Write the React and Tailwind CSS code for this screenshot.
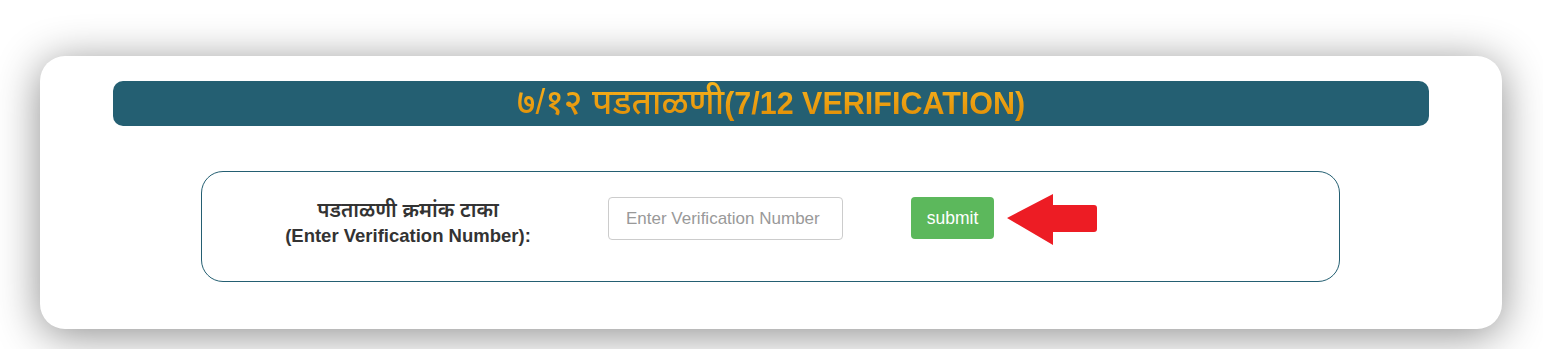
export default function App() {
  return (
    <div
      className="w-full bg-white pt-[56px] pb-[20px] pl-[40px] pr-[41px]"
      style={{ fontFamily: '"Liberation Sans", "Noto Sans", sans-serif' }}
    >
      <div className="box-border h-[273px] rounded-[25px] bg-white pt-[25px] shadow-[0_6px_44px_rgba(0,0,0,0.45)]">
        <div className="mx-[73px] flex h-[45px] items-center justify-center rounded-[10px] bg-[#245f72]">
          <h2 className="bg-gradient-to-b from-[#f8b51e] to-[#dc8600] bg-clip-text text-[30.5px] font-bold leading-[45px] text-transparent">
            <span className="text-[35px] font-medium leading-none">७/१२ पडताळणी</span>(7/12 VERIFICATION)
          </h2>
        </div>
        <div className="ml-[161px] mr-[162px] mt-[45px] box-border flex h-[111px] items-start rounded-[22px] border border-[#245f72] pt-[25px]">
          <div className="ml-[6px] w-[400px] text-center text-[18.5px] font-bold leading-[26px] text-[#333]">
            <div className="text-[20.5px] font-semibold">पडताळणी क्रमांक टाका</div>
            <div>(Enter Verification Number):</div>
          </div>
          <input
            type="text"
            placeholder="Enter Verification Number"
            className="box-border h-[43px] w-[235px] rounded-[4px] border border-[#ccc] bg-white px-[17px] text-[17px] text-[#555] placeholder:text-[#999] outline-none"
          />
          <button className="ml-[68px] h-[42px] w-[83px] rounded-[4px] bg-[#5cb85c] text-[17.5px] text-white">
            submit
          </button>
          <svg
            className="-mt-[4px] ml-[12px]"
            width="92"
            height="54"
            viewBox="0 0 92 54"
          >
            <path
              d="M1 25 L47 1 L47 12 L88 12 Q91 12 91 15 L91 36 Q91 39 88 39 L47 39 L47 52 Z"
              fill="#ed1c24"
            />
          </svg>
        </div>
      </div>
    </div>
  );
}
